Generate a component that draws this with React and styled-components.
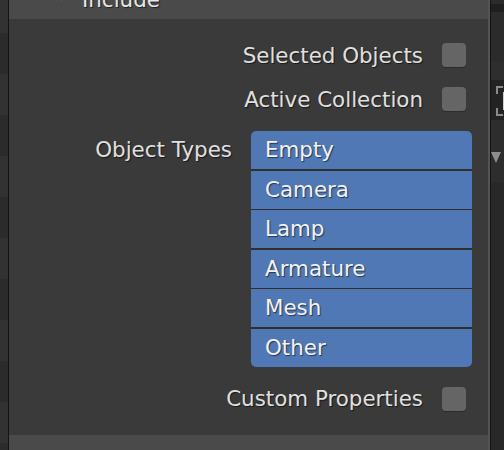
import React from 'react'
import styled, { createGlobalStyle } from 'styled-components'

const GlobalStyle = createGlobalStyle`
  html, body {
    margin: 0;
    padding: 0;
    background: #2b2b2b;
    overflow: hidden;
  }
  * { box-sizing: border-box; }
`

const leftBands = [33, 41, 41, 41, 41, 41, 41, 41, 41, 41, 41, 41]
const rightBands = [
  { h: 4, c: '#2b2b2b' },
  { h: 8, c: '#1f1f1f' },
  { h: 50, c: '#2b2b2b' },
  { h: 18, c: '#2e2e2e' },
  { h: 40, c: '#232323', icon: 'frame' },
  { h: 62, c: '#2d2d2d', icon: 'arrow' },
  { h: 268, c: '#282828' },
]
const types = ['Empty', 'Camera', 'Lamp', 'Armature', 'Mesh', 'Other']

function Checkbox() {
  return <Check />
}

function CheckRow({ label }) {
  return (
    <Row>
      <Label>{label}</Label>
      <Checkbox />
    </Row>
  )
}

export default function App() {
  return (
    <Screen>
      <GlobalStyle />
      <LeftStrip>
        {leftBands.map((h, i) => (
          <Band key={i} style={{ height: h }} $light={i % 2 === 0} />
        ))}
      </LeftStrip>
      <Panel>
        <Header>
          <Disclosure>▾</Disclosure>
          <HeaderTitle>Include</HeaderTitle>
        </Header>
        <Body>
          <CheckRow label="Selected Objects" />
          <CheckRow label="Active Collection" />
          <SplitRow>
            <SplitLabel>Object Types</SplitLabel>
            <List>
              {types.map((t) => (
                <Item key={t}>{t}</Item>
              ))}
            </List>
          </SplitRow>
          <CheckRow label="Custom Properties" />
        </Body>
        <Footer />
      </Panel>
      <RightStrip>
        {rightBands.map((b, i) => (
          <RightBand key={i} style={{ height: b.h, background: b.c }}>
            {b.icon === 'frame' && (
              <FrameIcon width="14" height="34" viewBox="0 0 14 34">
                <path d="M1 10 V3 H7 M1 24 V31 H7" stroke="#8a8a8a" strokeWidth="2" fill="none" />
                <rect x="7" y="8" width="7" height="18" fill="#cfcfcf" />
              </FrameIcon>
            )}
            {b.icon === 'arrow' && (
              <ArrowIcon width="10" height="12" viewBox="0 0 10 12">
                <path d="M0 0 H10 L5 11 Z" fill="#8d8d8d" />
              </ArrowIcon>
            )}
          </RightBand>
        ))}
      </RightStrip>
    </Screen>
  )
}

const Screen = styled.div`
  display: flex;
  width: 504px;
  height: 450px;
  overflow: hidden;
  font-family: "DejaVu Sans", "Liberation Sans", sans-serif;
`

const LeftStrip = styled.div`
  width: 9px;
  flex-shrink: 0;
  display: flex;
  flex-direction: column;
  border-right: 1px solid #141414;
  overflow: hidden;
`

const Band = styled.div`
  flex-shrink: 0;
  background: ${(p) => (p.$light ? '#323232' : '#2b2b2b')};
`

const Panel = styled.div`
  width: 481px;
  flex-shrink: 0;
  display: flex;
  flex-direction: column;
  background: #3a3a3a;
  border-right: 2px solid #545454;
`

const Header = styled.div`
  height: 19px;
  flex-shrink: 0;
  background: #4a4a4a;
  display: flex;
  align-items: flex-end;
  overflow: hidden;
  padding-left: 47px;
`

const Disclosure = styled.span`
  font-size: 20px;
  line-height: 20px;
  color: #a0a0a0;
  margin-bottom: 15px;
  width: 26px;
`

const HeaderTitle = styled.span`
  font-size: 21.4px;
  line-height: 20px;
  color: #e6e6e6;
  margin-bottom: 9px;
  text-shadow: 1px 1px 1px rgba(0, 0, 0, 0.6);
`

const Body = styled.div`
  flex: 1;
  display: flex;
  flex-direction: column;
  gap: 20px;
  padding: 24px 16px 0 0;
`

const Row = styled.div`
  display: flex;
  justify-content: flex-end;
  align-items: center;
  gap: 19px;
  height: 24px;
  padding-right: 6px;
`

const Label = styled.span`
  font-size: 21.4px;
  color: #e0e0e0;
  white-space: nowrap;
  text-shadow: 1px 1px 1px rgba(0, 0, 0, 0.6);
`

const Check = styled.div`
  width: 24px;
  height: 24px;
  border-radius: 4px;
  background: #656565;
  box-shadow: 0 1px 0 #2c2c2c;
`

const SplitRow = styled.div`
  display: flex;
  justify-content: flex-end;
  align-items: flex-start;
  gap: 19px;
`

const SplitLabel = styled.span`
  font-size: 21.4px;
  line-height: 38px;
  color: #e0e0e0;
  white-space: nowrap;
  text-shadow: 1px 1px 1px rgba(0, 0, 0, 0.6);
`

const List = styled.div`
  width: 221px;
  display: flex;
  flex-direction: column;
  gap: 1.5px;
  background: #2f2f2f;
  border-radius: 5px;
  overflow: hidden;
`

const Item = styled.div`
  height: 38px;
  line-height: 38px;
  padding-left: 14px;
  background: #5078b5;
  font-size: 21.4px;
  color: #f2f2f2;
  text-shadow: 1px 1px 1px rgba(0, 0, 0, 0.55);
`

const Footer = styled.div`
  height: 15px;
  flex-shrink: 0;
  background: #4a4a4a;
`

const RightStrip = styled.div`
  flex: 1;
  display: flex;
  flex-direction: column;
  border-left: 1px solid #141414;
  overflow: hidden;
`

const RightBand = styled.div`
  flex-shrink: 0;
  position: relative;
`

const FrameIcon = styled.svg`
  position: absolute;
  left: 5px;
  top: 4px;
`

const ArrowIcon = styled.svg`
  position: absolute;
  left: 0;
  top: 32px;
`
